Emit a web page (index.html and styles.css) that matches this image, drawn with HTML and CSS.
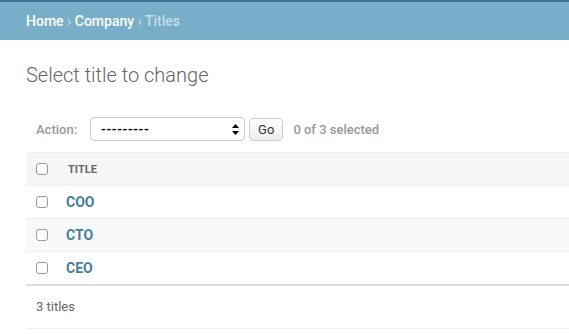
FILE: index.html
```html
<!DOCTYPE html>
<html lang="en">
<head>
    <meta charset="UTF-8">
    <meta name="viewport" content="width=device-width, initial-scale=1.0">
    <title>Select title to change</title>
    <link rel="stylesheet" href="styles.css">
</head>
<body>
    <div class="breadcrumbs">
        <a href="#">Home</a> &rsaquo; <a href="#">Company</a> &rsaquo; Titles
    </div>

    <div class="content">
        <h1>Select title to change</h1>

        <div class="changelist">
            <div class="actions">
                <label>Action:</label>
                <div class="select">
                    <span>---------</span>
                    <svg class="arrows" width="7" height="11" viewBox="0 0 7 11">
                        <path d="M3.5 0 L7 4 L0 4 Z M3.5 11 L7 7 L0 7 Z" fill="#000"/>
                    </svg>
                </div>
                <button class="go">Go</button>
                <span class="counter">0 of 3 selected</span>
            </div>

            <table class="result-list">
                <thead>
                    <tr>
                        <th class="check"><span class="box"></span></th>
                        <th>Title</th>
                    </tr>
                </thead>
                <tbody>
                    <tr class="row1">
                        <td class="check"><span class="box"></span></td>
                        <th><a href="#">COO</a></th>
                    </tr>
                    <tr class="row2">
                        <td class="check"><span class="box"></span></td>
                        <th><a href="#">CTO</a></th>
                    </tr>
                    <tr class="row1">
                        <td class="check"><span class="box"></span></td>
                        <th><a href="#">CEO</a></th>
                    </tr>
                </tbody>
            </table>

            <p class="paginator">3 titles</p>
        </div>
    </div>
</body>
</html>
```

FILE: styles.css
```css
body {
    margin: 0;
    font-family: Roboto, "Liberation Sans", sans-serif;
    font-size: 14px;
    color: #333;
    background: #fff;
}

a {
    color: #447e9b;
    text-decoration: none;
}

.breadcrumbs {
    background: #79aec8;
    border-top: 2px solid #417690;
    padding: 0 26px;
    height: 38px;
    line-height: 38px;
    color: #c4dce8;
    font-size: 14px;
    font-weight: 500;
}
.breadcrumbs a {
    color: #fff;
}

.content {
    padding: 0 0 0 26px;
}

h1 {
    margin: 0;
    padding-top: 22px;
    font-size: 20px;
    font-weight: 300;
    color: #666;
    line-height: 26px;
}

.actions {
    display: flex;
    align-items: center;
    height: 24px;
    margin-top: 29px;
    padding: 0 10px 11px;
    color: #999;
    font-size: 13px;
}
.actions label {
    margin-right: 13px;
    font-weight: 500;
}

.select {
    box-sizing: border-box;
    width: 155px;
    height: 24px;
    border: 1px solid #ccc;
    border-radius: 4px;
    display: flex;
    align-items: center;
    justify-content: space-between;
    padding: 0 5px 0 10px;
    color: #000;
    font-size: 14px;
    font-weight: 500;
    letter-spacing: 0.6px;
    background: #fff;
}

.go {
    box-sizing: border-box;
    height: 23px;
    margin-left: 4px;
    padding: 0 8px;
    border: 1px solid #ccc;
    border-radius: 4px;
    background: linear-gradient(#fff, #ededed);
    color: #333;
    font-family: Roboto, "Liberation Sans", sans-serif;
    font-size: 13px;
}

.counter {
    margin-left: 10px;
    font-weight: 500;
}

.result-list {
    width: 100%;
    border-collapse: collapse;
}
.result-list th,
.result-list td {
    text-align: left;
    height: 32px;
    padding: 0 10px;
    border-bottom: 1px solid #eee;
    vertical-align: middle;
}
.result-list thead th {
    background: #f6f6f6;
    border-top: 1px solid #eee;
    font-size: 11px;
    font-weight: 700;
    text-transform: uppercase;
    color: #666;
}
.result-list .check {
    width: 12px;
}
.result-list tbody th {
    font-size: 14px;
    font-weight: 700;
}
.result-list tbody th a {
    margin-left: -2px;
}
.row2 td, .row2 th {
    background: #f9f9f9;
}
.result-list tbody tr:last-child td,
.result-list tbody tr:last-child th {
    border-bottom: 2px solid #ddd;
}

.box {
    display: block;
    box-sizing: border-box;
    width: 12px;
    height: 12px;
    border: 1px solid #999;
    border-radius: 3px;
    background: #fff;
}

.paginator {
    margin: 0;
    padding: 0 10px;
    height: 42px;
    line-height: 42px;
    border-bottom: 1px solid #eee;
    font-size: 13px;
    color: #666;
}
```
